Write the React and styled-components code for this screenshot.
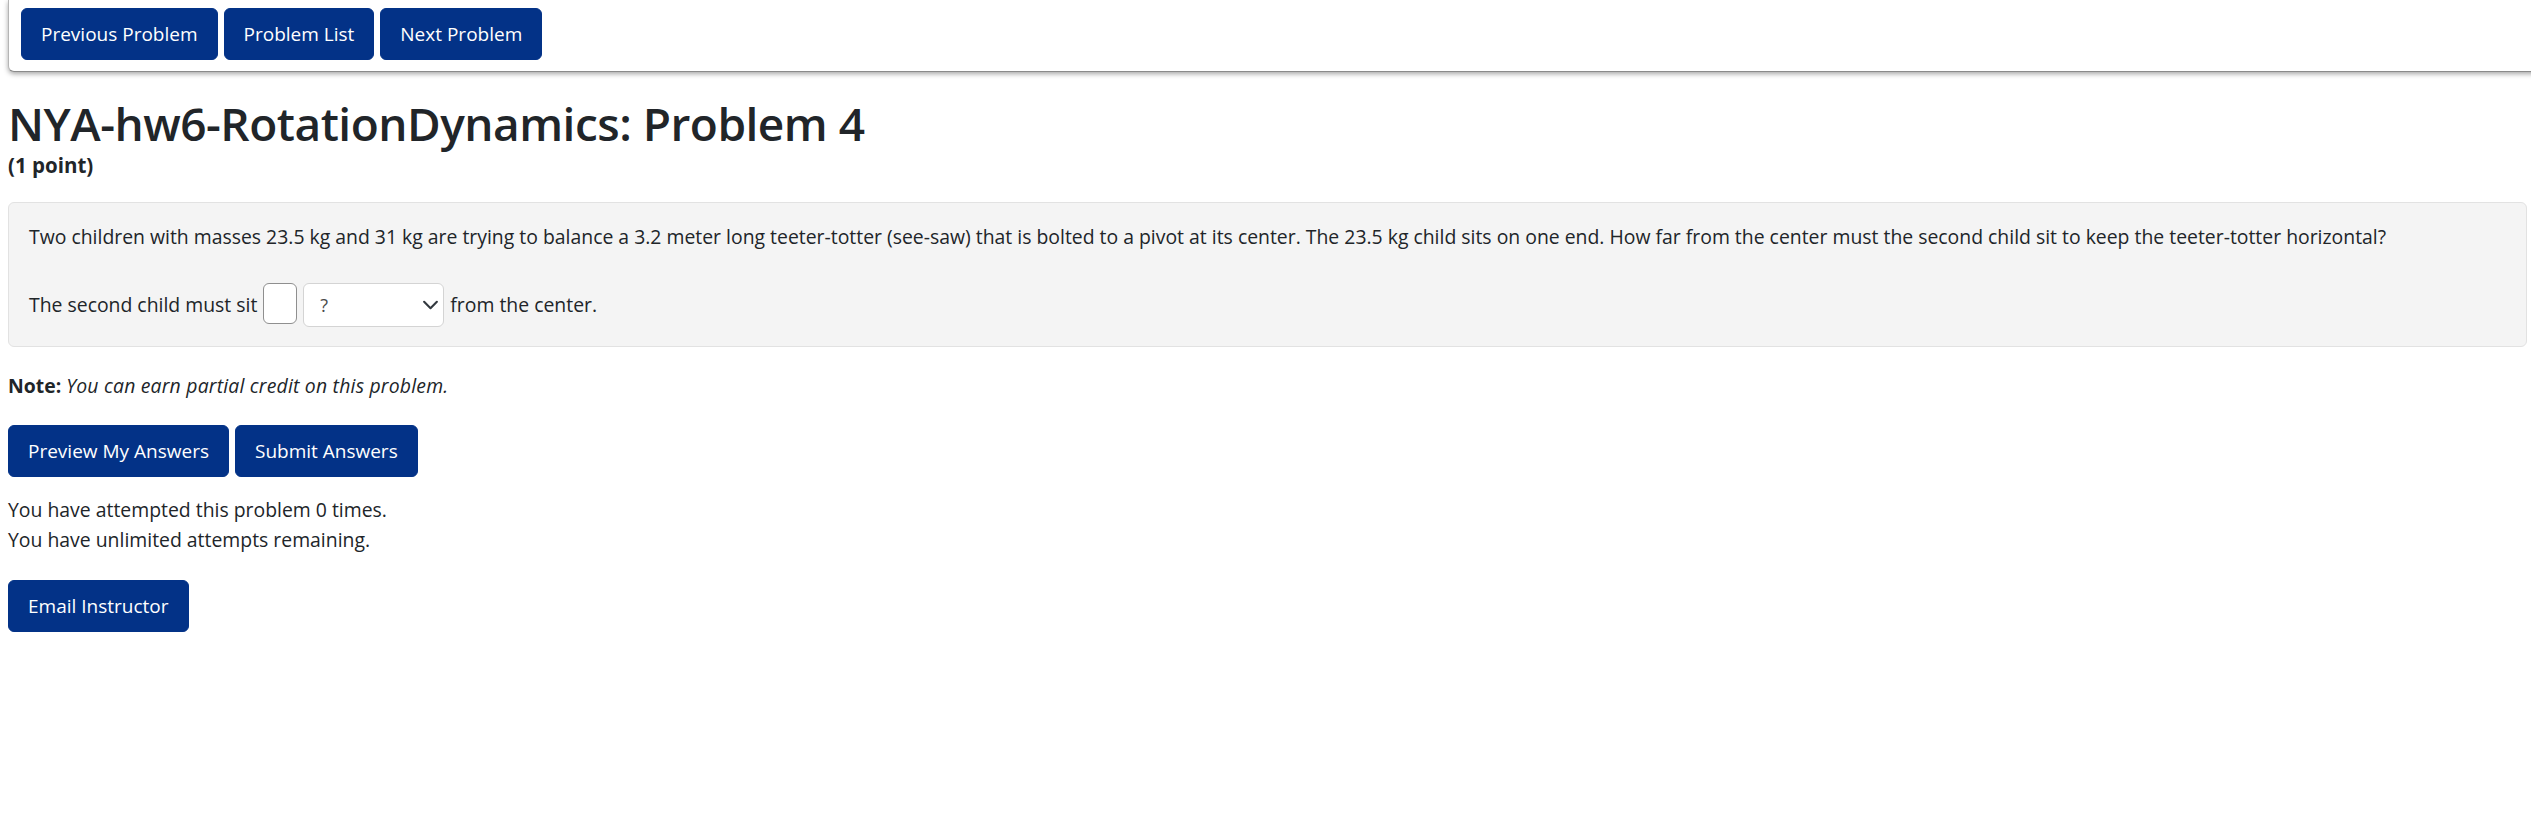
import styled, { createGlobalStyle } from "styled-components";

const FONT = `"Open Sans", "Noto Sans", "Liberation Sans", sans-serif`;

const GlobalStyle = createGlobalStyle`
  html, body {
    margin: 0;
    padding: 0;
    background: #fff;
    overflow-x: hidden;
  }
  body {
    font-family: ${FONT};
    font-size: 19.4px;
    line-height: 30px;
    color: #212529;
  }
`;

// top toolbar with the problem navigation
const NavBar = styled.nav`
  display: flex;
  gap: 6px;
  margin: 0 -12px 0 8px;
  padding: 8px 0 11px 12px;
  background: #fff;
  border-left: 1px solid #b5b5b5;
  border-bottom: 1px solid #8a8a8a;
  border-bottom-left-radius: 6px;
  box-shadow: 0 2px 5px rgba(0, 0, 0, 0.35);
`;

const Button = styled.button`
  font-family: ${FONT};
  font-size: 19px;
  line-height: 30px;
  color: #fff;
  background: #033287;
  border: 1px solid #033287;
  border-radius: 6px;
  padding: 10px 19px;
  cursor: pointer;
  white-space: nowrap;
  &:hover {
    background: #022a70;
  }
`;

const Main = styled.main`
  padding: 0 4px 0 8px;
`;

const Title = styled.h1`
  margin: 24px 0 2px;
  font-size: 46px;
  font-weight: 600;
  letter-spacing: -0.5px;
  line-height: 55px;
`;

const Points = styled.div`
  font-size: 20.5px;
  font-weight: 700;
  line-height: 24px;
`;

const ProblemBox = styled.div`
  margin-top: 25px;
  padding: 19px 20px;
  background: #f4f4f4;
  border: 1px solid #e2e2e2;
  border-radius: 6px;
`;

const Paragraph = styled.p`
  margin: 0 0 31px;
`;

const AnswerRow = styled.div`
  display: flex;
  align-items: center;
  gap: 6px;
  height: 44px;
`;

const AnswerInput = styled.input`
  box-sizing: border-box;
  width: 34px;
  height: 41px;
  margin-top: -3px;
  padding: 0 4px;
  border: 1px solid #8f8f8f;
  border-radius: 6px;
  background: #fff;
  font-family: ${FONT};
  font-size: 19px;
`;

const SelectWrap = styled.div`
  position: relative;
  width: 141px;
  height: 44px;
`;

const UnitSelect = styled.select`
  appearance: none;
  box-sizing: border-box;
  width: 100%;
  height: 100%;
  padding: 0 30px 0 16px;
  border: 1px solid #d4d4d4;
  border-radius: 6px;
  background: #fff;
  color: #4a4a4a;
  font-family: ${FONT};
  font-size: 18px;
`;

const Chevron = styled.svg`
  position: absolute;
  right: 5px;
  top: 50%;
  transform: translateY(-50%);
  width: 17px;
  height: 17px;
  pointer-events: none;
`;

const Note = styled.p`
  margin: 24px 0 0;
  & b {
    font-weight: 700;
  }
  & i {
    font-style: italic;
    letter-spacing: 0.2px;
  }
`;

const ButtonRow = styled.div`
  display: flex;
  gap: 6px;
  margin-top: ${(p) => p.$top || 0}px;
`;

const Attempts = styled.div`
  margin-top: 18px;
`;

const App = () => {
  return (
    <>
      <GlobalStyle />
      <NavBar>
        <Button>Previous Problem</Button>
        <Button>Problem List</Button>
        <Button>Next Problem</Button>
      </NavBar>
      <Main>
        <Title>NYA-hw6-RotationDynamics: Problem 4</Title>
        <Points>(1 point)</Points>
        <ProblemBox>
          <Paragraph>
            Two children with masses 23.5 kg and 31 kg are trying to balance a
            3.2 meter long teeter-totter (see-saw) that is bolted to a pivot at
            its center. The 23.5 kg child sits on one end. How far from the
            center must the second child sit to keep the teeter-totter
            horizontal?
          </Paragraph>
          <AnswerRow>
            <span>The second child must sit</span>
            <AnswerInput type="text" aria-label="answer" />
            <SelectWrap>
              <UnitSelect defaultValue="?" aria-label="units">
                <option value="?">?</option>
                <option value="m">m</option>
                <option value="cm">cm</option>
              </UnitSelect>
              <Chevron viewBox="0 0 16 16">
                <path
                  d="m2 5 6 6 6-6"
                  fill="none"
                  stroke="#343a40"
                  strokeWidth="2"
                  strokeLinecap="round"
                  strokeLinejoin="round"
                />
              </Chevron>
            </SelectWrap>
            <span>from the center.</span>
          </AnswerRow>
        </ProblemBox>
        <Note>
          <b>Note:</b> <i>You can earn partial credit on this problem.</i>
        </Note>
        <ButtonRow $top={24}>
          <Button>Preview My Answers</Button>
          <Button>Submit Answers</Button>
        </ButtonRow>
        <Attempts>
          You have attempted this problem 0 times.
          <br />
          You have unlimited attempts remaining.
        </Attempts>
        <ButtonRow $top={25}>
          <Button>Email Instructor</Button>
        </ButtonRow>
      </Main>
    </>
  );
};

export default App;
